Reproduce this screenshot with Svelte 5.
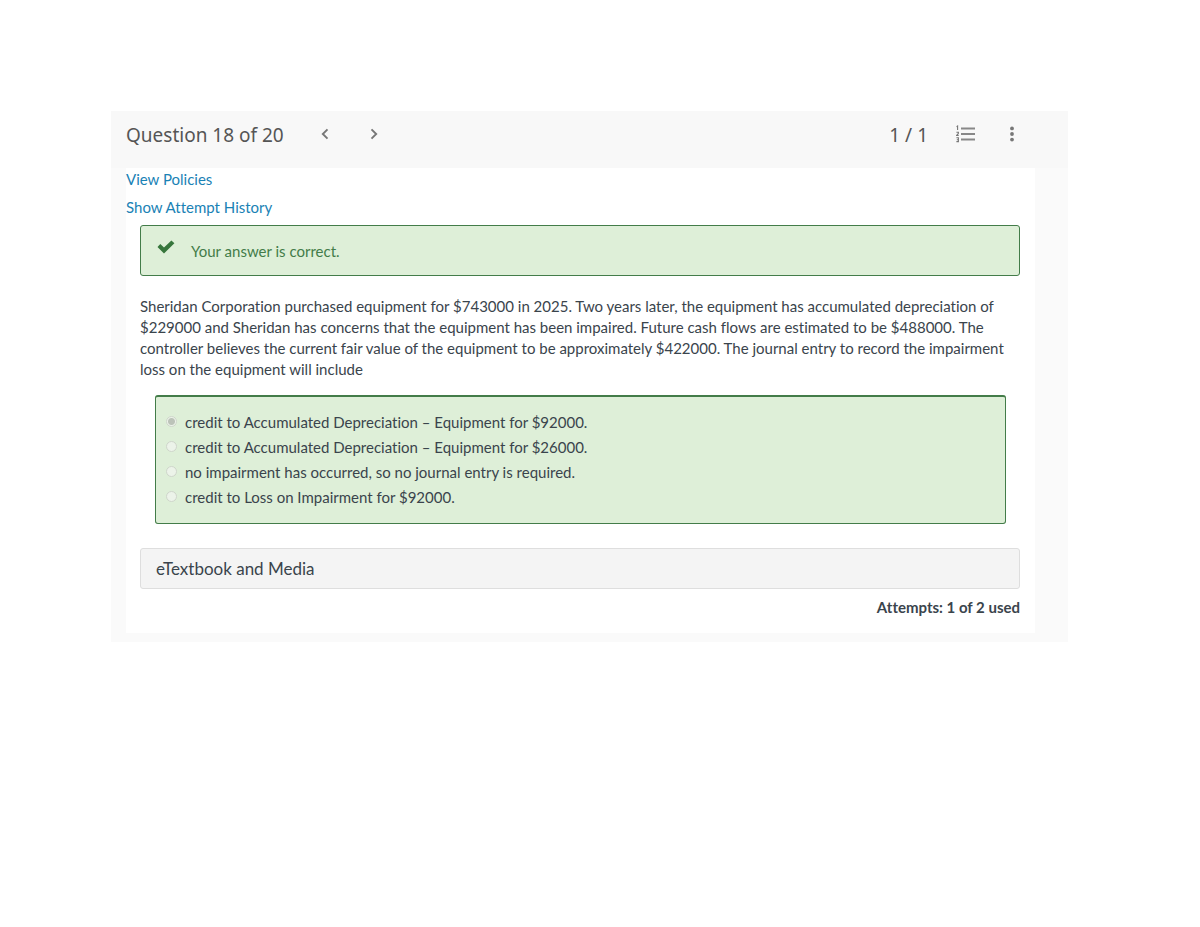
<script lang="ts">
    const question = 18;
    const total = 20;
    const options = [
        "credit to Accumulated Depreciation – Equipment for $92000.",
        "credit to Accumulated Depreciation – Equipment for $26000.",
        "no impairment has occurred, so no journal entry is required.",
        "credit to Loss on Impairment for $92000.",
    ];
    let selected = $state(0);
</script>

<main class="question">
    <header class="toolbar">
        <h1>Question {question} of {total}</h1>
        <nav class="pager">
            <button type="button" aria-label="Previous question">
                <svg width="8" height="12" viewBox="0 0 8 12">
                    <path d="M6.5 1.3 1.8 6l4.7 4.7" />
                </svg>
            </button>
            <button type="button" aria-label="Next question">
                <svg width="8" height="12" viewBox="0 0 8 12">
                    <path d="M1.5 1.3 6.2 6l-4.7 4.7" />
                </svg>
            </button>
        </nav>
        <span class="score">1 / 1</span>
        <button type="button" class="list-button" aria-label="Question list">
            <svg width="20" height="18" viewBox="0 0 20 18">
                <g class="lines">
                    <path d="M5 3.5h14M5 9h14M5 14.5h14" />
                </g>
                <g class="digits">
                    <path d="M.6 1.7 1.6 1v4" />
                    <path d="M.4 7.2h2v1.2L.5 10.4h2.2" />
                    <path d="M.4 12.8h2v3.8h-2M.8 14.7h1.6" />
                </g>
            </svg>
        </button>
        <button type="button" class="more-button" aria-label="More options">
            <svg width="4" height="16" viewBox="0 0 4 16">
                <circle cx="2" cy="2.4" r="1.9" />
                <circle cx="2" cy="8" r="1.9" />
                <circle cx="2" cy="13.6" r="1.9" />
            </svg>
        </button>
    </header>

    <section class="content">
        <div class="links">
            <a href="#policies">View Policies</a>
            <a href="#history">Show Attempt History</a>
        </div>

        <div class="body">
            <div class="result" role="status">
                <svg width="18" height="14" viewBox="0 0 18 14">
                    <path d="M0.5 6.9 3.3 4.1 7 7.6 14.4 0.5 17.4 3.3 7 13.5Z" />
                </svg>
                <span>Your answer is correct.</span>
            </div>

            <p class="prompt">
                Sheridan Corporation purchased equipment for $743000 in 2025.
                Two years later, the equipment has accumulated depreciation of
                $229000 and Sheridan has concerns that the equipment has been
                impaired. Future cash flows are estimated to be $488000. The
                controller believes the current fair value of the equipment to
                be approximately $422000. The journal entry to record the
                impairment loss on the equipment will include
            </p>

            <fieldset class="options" aria-label="Answer choices">
                {#each options as option, i}
                    <div class="option">
                        <input
                            id="option-{i}"
                            name="answer"
                            type="radio"
                            value={i}
                            bind:group={selected}
                            disabled
                        />
                        <label for="option-{i}">{option}</label>
                    </div>
                {/each}
            </fieldset>

            <button type="button" class="media">eTextbook and Media</button>

            <p class="attempts">Attempts: 1 of 2 used</p>
        </div>
    </section>
</main>

<style>
    :global(body) {
        background-color: #fff;
    }

    .question {
        margin: 111px 132px 0 111px;
        padding-bottom: 9px;
        background-color: #fafafa;
        font-family: Lato, "Liberation Sans", sans-serif;
        font-size: 15px;
        font-variant-ligatures: none;
        color: #3a444c;
    }

    button {
        border: none;
        background: none;
        padding: 0;
        font: inherit;
        color: inherit;
        cursor: pointer;
    }

    .toolbar {
        display: flex;
        align-items: center;
        box-sizing: border-box;
        height: 57px;
        padding: 0 54px 10px 15px;
        background-color: #f8f8f8;
        font-family: "Noto Sans", "Open Sans", sans-serif;
        font-size: 19px;
        color: #555;
    }

    h1 {
        margin: 0;
        font-size: 19px;
        font-weight: 400;
    }

    .pager {
        display: flex;
        gap: 41px;
        margin-left: 37px;
        margin-right: auto;
    }

    .toolbar button {
        display: flex;
        padding-bottom: 2px;
    }

    .pager path {
        fill: none;
        stroke: #777;
        stroke-width: 1.9;
    }

    .list-button {
        margin-left: 28px;
    }

    .lines {
        stroke: #888;
        stroke-width: 1.9;
    }

    .digits {
        fill: none;
        stroke: #777;
        stroke-width: 1.1;
    }

    .more-button {
        margin-left: 34px;
        fill: #777;
    }

    .content {
        margin: 0 33px 0 15px;
        padding-bottom: 16px;
        background-color: #fff;
    }

    .links {
        display: flex;
        flex-direction: column;
        align-items: flex-start;
        line-height: 22px;
        gap: 6px;
    }

    a {
        color: #1a82b5;
        text-decoration: none;
    }

    a:hover {
        text-decoration: underline;
    }

    .body {
        padding: 7px 15px 0 14px;
    }

    .result {
        display: flex;
        align-items: center;
        box-sizing: border-box;
        height: 51px;
        padding-left: 16px;
        gap: 16px;
        border: 1px solid #437c49;
        border-radius: 3px;
        background-color: #deefd8;
        color: #437c49;
    }

    .result svg {
        margin-bottom: 8px;
        fill: #37763c;
    }

    .prompt {
        margin: 20px 0 15px;
        line-height: 21px;
    }

    .options {
        margin: 0 14px 24px 15px;
        padding: 13px 10px;
        border: 1px solid #437c49;
        border-top-width: 2px;
        border-radius: 3px;
        background-color: #deefd8;
    }

    .option {
        display: flex;
        align-items: center;
        gap: 8px;
        line-height: 25px;
    }

    .option input {
        appearance: none;
        box-sizing: border-box;
        width: 11px;
        height: 11px;
        margin: 0 0 2px;
        border: 1px solid #cfd6cb;
        border-radius: 50%;
        background-color: #ecf3e9;
    }

    .option input:checked {
        background-image: radial-gradient(#bcc3b9 3px, transparent 4px);
    }

    .media {
        display: block;
        box-sizing: border-box;
        width: 100%;
        height: 41px;
        padding: 0 15px;
        border: 1px solid #dedede;
        border-radius: 3px;
        background-color: #f4f4f4;
        font-size: 17px;
        text-align: left;
    }

    .attempts {
        margin: 8px 0 0;
        font-weight: 700;
        line-height: 20px;
        text-align: right;
    }
</style>
